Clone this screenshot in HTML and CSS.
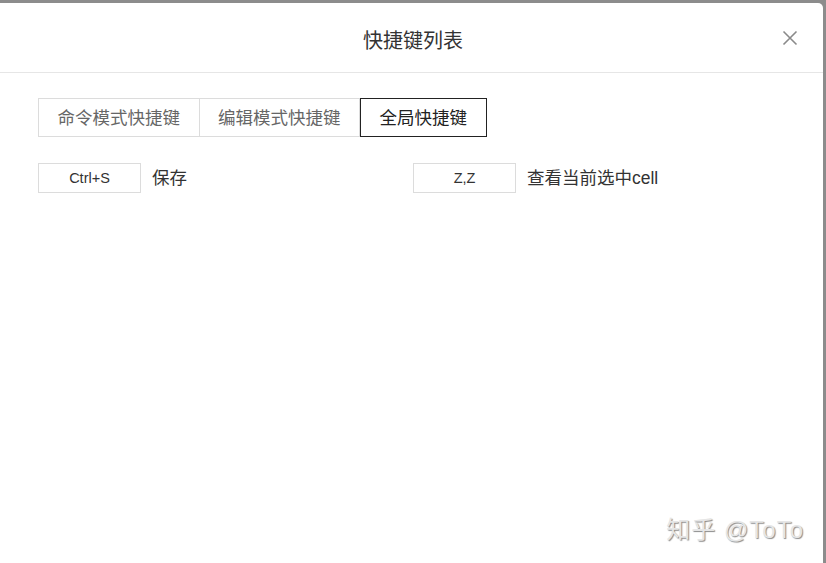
FILE: index.html
```html
<!DOCTYPE html>
<html lang="zh-CN">
<head>
<meta charset="utf-8">
<title>快捷键列表</title>
<link rel="stylesheet" href="styles.css">
</head>
<body>
<div class="modal">
  <div class="header">
    <div class="title">快捷键列表</div>
    <button class="close" aria-label="关闭">
      <svg width="16" height="16" viewBox="0 0 16 16"><path d="M1.5 1.5 L14.5 14.5 M14.5 1.5 L1.5 14.5" stroke="#8a8a8a" stroke-width="1.6" fill="none"/></svg>
    </button>
  </div>
  <div class="content">
    <div class="tabs">
      <div class="tab">命令模式快捷键</div>
      <div class="tab">编辑模式快捷键</div>
      <div class="tab active">全局快捷键</div>
    </div>
    <div class="list">
      <div class="item"><span class="key">Ctrl+S</span><span class="desc">保存</span></div>
      <div class="item"><span class="key">Z,Z</span><span class="desc">查看当前选中cell</span></div>
    </div>
  </div>
  <div class="watermark">知乎 @ToTo</div>
</div>
</body>
</html>
```

FILE: styles.css
```css
html, body {
  margin: 0;
  height: 100%;
}
body {
  background: #8c8c8c;
  padding: 3px 3px 0 0;
  box-sizing: border-box;
  font-family: "Liberation Sans", "Noto Sans CJK SC", sans-serif;
  overflow: hidden;
}
.modal {
  background: #fff;
  height: 100%;
  border-radius: 0 5px 0 0;
  display: flex;
  flex-direction: column;
}
.header {
  height: 69px;
  border-bottom: 1px solid #e6e6e6;
  display: flex;
  align-items: center;
  justify-content: center;
  position: relative;
}
.title {
  font-size: 20px;
  color: #333;
  font-family: "Noto Sans CJK SC", sans-serif;
  margin-left: 3px;
  margin-top: 3px;
}
.close {
  position: absolute;
  right: 25px;
  top: 27px;
  border: 0;
  background: none;
  padding: 0;
  width: 16px;
  height: 16px;
  display: block;
}
.close svg { display: block; }
.content {
  padding: 25px 35px 0 38px;
  flex: 1;
}
.tabs {
  display: flex;
}
.tab {
  height: 37px;
  line-height: 36px;
  padding: 0 18.5px;
  font-size: 17.5px;
  color: #666;
  border: 1px solid #dcdcdc;
  font-family: "Noto Sans CJK SC", sans-serif;
}
.tab + .tab {
  border-left: none;
}
.tab.active {
  color: #222;
  border: 1px solid #222;
}
.list {
  margin-top: 26px;
  display: grid;
  grid-template-columns: 375px 375px;
}
.item {
  display: flex;
  align-items: center;
}
.key {
  width: 101px;
  height: 28px;
  border: 1px solid #dcdcdc;
  display: flex;
  align-items: center;
  justify-content: center;
  font-size: 14.5px;
  color: #333;
}
.desc {
  margin-left: 11px;
  margin-top: -3px;
  font-size: 17.5px;
  color: #333;
}
.watermark {
  align-self: flex-end;
  margin: 0 19px 18px 0;
  font-size: 24px;
  color: #e6e6e6;
  text-shadow: 1px 1px 1px #8a8a8a;
  font-family: "Liberation Sans", "Noto Sans CJK SC", sans-serif;
  letter-spacing: 1px;
}
```
